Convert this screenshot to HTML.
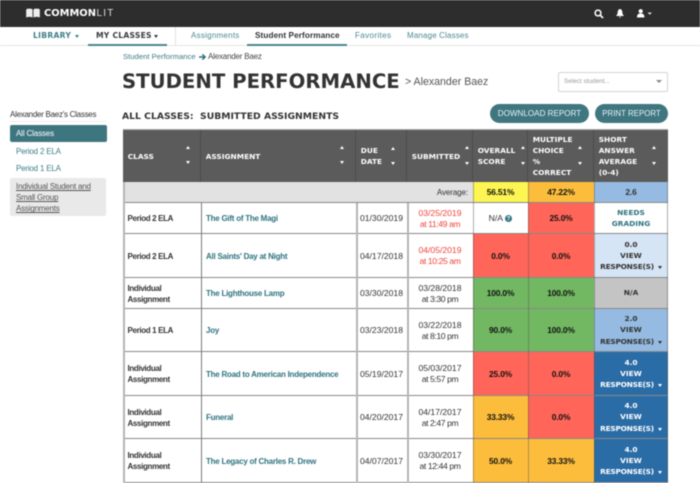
<!DOCTYPE html>
<html><head><meta charset="utf-8">
<style>
html,body{margin:0;padding:0;background:#fff}
#p{position:relative;width:700px;height:483px;overflow:hidden;background:#fff;font-family:"Liberation Sans",sans-serif;color:#333;filter:blur(.45px)}
#p div,#p span.a{position:absolute;box-sizing:border-box}
.t{white-space:nowrap}
.w{font-family:"DejaVu Sans",sans-serif;font-weight:700}
.c{display:flex;align-items:center;justify-content:center;text-align:center;font-size:8.6px;line-height:11.2px;border-bottom:1px solid #888;white-space:nowrap;padding-top:1.5px}
.l{justify-content:flex-start;text-align:left;padding-left:4.5px}
.d{font-weight:700;color:#333;font-size:8px;letter-spacing:-.35px}
.h{background:#5b5b5b;color:#fff;font-family:"DejaVu Sans",sans-serif;font-weight:700;font-size:7.4px;line-height:11px;display:flex;align-items:center;padding-left:4.7px;border-right:1px solid #4c4c4c}
.link{color:#2f7480;font-weight:700;font-size:8px;letter-spacing:-.25px;padding-left:5px}
.b{font-weight:700;color:#111;font-size:8.4px;letter-spacing:-.15px}
.u{font-family:"DejaVu Sans",sans-serif;font-weight:700;font-size:7.4px;line-height:11.3px;padding-top:0}
.r{letter-spacing:-.25px}
.s{letter-spacing:-.4px}
.red{background:#ff6659}.grn{background:#72b863}.org{background:#fdbd3c}.yel{background:#fdf551}
.dk{background:#2a6ca6;color:#fff}.lt{background:#d6e5f5;color:#333}.md{background:#96bbe2;color:#333}
.up,.dn{width:0;height:0;border-left:2.5px solid transparent;border-right:2.5px solid transparent}
.up{border-bottom:3px solid #fff}.dn{border-top:3px solid #fff}
.car{display:inline-block;width:0;height:0;border-left:2.5px solid transparent;border-right:2.5px solid transparent;border-top:3px solid currentColor;margin-left:4px;vertical-align:0}
</style></head><body><div id="p">

<!-- top bar -->
<div style="left:0;top:0;width:700px;height:27px;background:#2d2d2d"></div>
<svg style="position:absolute;left:26px;top:8px" width="14" height="10" viewBox="0 0 15 11"><path d="M0 1.5 C2 .5 5 .5 7 1.5 V10.5 C5 9.5 2 9.5 0 10.5Z M8 1.5 C10 .5 13 .5 15 1.5 V10.5 C13 9.5 10 9.5 8 10.5Z" fill="#eee"/></svg>
<div class="t w" style="left:44px;top:7px;font-size:9.9px;line-height:13px;color:#fff">COMMON</div>
<div class="t" style="left:96.5px;top:7px;font-size:10px;line-height:13px;color:#ddd;letter-spacing:1.2px">LIT</div>
<svg style="position:absolute;left:594px;top:9px" width="10" height="10" viewBox="0 0 10 10"><circle cx="4" cy="4" r="2.9" fill="none" stroke="#fff" stroke-width="1.5"/><path d="M6.2 6.2 L9 9" stroke="#fff" stroke-width="1.7"/></svg>
<svg style="position:absolute;left:616px;top:9px" width="8" height="9" viewBox="0 0 8 9"><path d="M4 0 C6 0.5 6.3 2 6.4 4 C6.5 5.5 7.4 6 8 7 H0 C.6 6 1.5 5.5 1.6 4 C1.7 2 2 .5 4 0Z M3 7.6 H5 L4 9Z" fill="#fff"/></svg>
<svg style="position:absolute;left:637px;top:9px" width="16" height="9" viewBox="0 0 16 9"><circle cx="3.7" cy="2.2" r="2.1" fill="#fff"/><path d="M0 8.5 C0 5 1.5 4.5 3.7 4.5 C5.9 4.5 7.4 5 7.4 8.5Z" fill="#fff"/><path d="M10.5 3.5 H15 L12.7 5.7Z" fill="#ddd"/></svg>

<!-- sub nav -->
<div style="left:0;top:27px;width:700px;height:19px;background:#fff;border-bottom:1px solid #e4e4e4"></div>
<div class="t w" style="left:33px;top:30px;font-size:7.6px;line-height:12px;color:#3f7f88;letter-spacing:.3px">LIBRARY</div>
<div class="a" style="left:75px;top:35px;width:0;height:0;border-left:2.5px solid transparent;border-right:2.5px solid transparent;border-top:3px solid #3f7f88"></div>
<div class="t w" style="left:96px;top:30px;font-size:7.6px;line-height:12px;color:#3a3a3a;letter-spacing:.25px">MY CLASSES</div>
<div class="a" style="left:154px;top:35px;width:0;height:0;border-left:2.5px solid transparent;border-right:2.5px solid transparent;border-top:3px solid #333"></div>
<div style="left:88px;top:44px;width:79px;height:2px;background:#4a8790"></div>
<div style="left:175px;top:27px;width:1px;height:18px;background:#e2e2e2"></div>
<div class="t" style="left:191px;top:30px;font-size:8px;line-height:12px;color:#4b8a93;letter-spacing:.25px">Assignments</div>
<div class="t" style="left:255px;top:30px;font-size:8.2px;line-height:12px;color:#333;font-weight:700;letter-spacing:.1px">Student Performance</div>
<div style="left:247px;top:44px;width:100px;height:2px;background:#4a8790"></div>
<div class="t" style="left:355px;top:30px;font-size:8.2px;line-height:12px;color:#4b8a93;letter-spacing:.3px">Favorites</div>
<div class="t" style="left:407px;top:30px;font-size:8px;line-height:12px;color:#4b8a93;letter-spacing:.15px">Manage Classes</div>

<!-- breadcrumb -->
<div class="t" style="left:123px;top:51px;font-size:7.7px;line-height:12px;color:#3c7c86">Student Performance</div>
<svg style="position:absolute;left:198.5px;top:53px" width="7" height="8" viewBox="0 0 8 8"><path d="M0 4 H6.5 M3.8 1 L7 4 L3.8 7" fill="none" stroke="#2f7480" stroke-width="1.7"/></svg>
<div class="t" style="left:208px;top:51px;font-size:8px;line-height:12px;color:#444;letter-spacing:-.2px">Alexander Baez</div>

<!-- title -->
<div class="t w" style="left:122px;top:68px;font-size:19.7px;line-height:27px;color:#333">STUDENT PERFORMANCE</div>
<div class="t" style="left:405px;top:74px;font-size:10.6px;line-height:16px;color:#555">&gt; Alexander Baez</div>

<!-- select -->
<div style="left:558px;top:72px;width:110px;height:20px;border:1px solid #d4d4d4;border-radius:2px;background:#fff"></div>
<div class="t" style="left:564px;top:76px;font-size:6.4px;line-height:12px;color:#999">Select student...</div>
<div class="a" style="left:656px;top:80px;width:0;height:0;border-left:3px solid transparent;border-right:3px solid transparent;border-top:3px solid #888"></div>

<!-- buttons -->
<div class="t" style="left:490px;top:104px;width:99px;height:19px;border-radius:10px;background:#3f7680;color:#eaf2f3;font-size:8.1px;line-height:19px;text-align:center">DOWNLOAD REPORT</div>
<div class="t" style="left:595px;top:104px;width:73px;height:19px;border-radius:10px;background:#3f7680;color:#eaf2f3;font-size:7.9px;line-height:19px;text-align:center">PRINT REPORT</div>

<div class="t w" style="left:122px;top:109.5px;font-size:9.25px;line-height:13px;color:#333">ALL CLASSES:&nbsp; SUBMITTED ASSIGNMENTS</div>

<!-- sidebar -->
<div class="t" style="left:10px;top:109px;font-size:8px;line-height:12px;color:#333;letter-spacing:-.27px">Alexander Baez's Classes</div>
<div style="left:10px;top:121px;width:96px;height:1px;background:#eee"></div>
<div class="t" style="left:10px;top:125px;width:97px;height:17px;background:#3e7680;border-radius:2px;color:#fff;font-size:8px;line-height:17px;padding-left:6px;letter-spacing:-.15px">All Classes</div>
<div class="t" style="left:16px;top:145.5px;font-size:8px;line-height:12px;color:#3c7f89;letter-spacing:-.2px">Period 2 ELA</div>
<div class="t" style="left:16px;top:163px;font-size:8px;line-height:12px;color:#3c7f89;letter-spacing:-.2px">Period 1 ELA</div>
<div style="left:10px;top:178px;width:96px;height:38px;background:#e9e9e9;border-radius:2px;padding:3px 6px;font-size:8px;letter-spacing:-.2px;line-height:11.2px;color:#555;text-decoration:underline">Individual Student and Small Group Assignments</div>

<!-- table header -->
<div style="left:123px;top:129px;width:545px;height:1px;background:#aaa"></div>
<div class="h" style="left:123px;top:130px;width:78px;height:52px">CLASS</div>
<div class="h" style="left:201px;top:130px;width:155px;height:52px">ASSIGNMENT</div>
<div class="h" style="left:356px;top:130px;width:51px;height:52px">DUE<br>DATE</div>
<div class="h" style="left:407px;top:130px;width:66px;height:52px">SUBMITTED</div>
<div class="h" style="left:473px;top:130px;width:55px;height:52px">OVERALL<br>SCORE</div>
<div class="h" style="left:528px;top:130px;width:66px;height:52px">MULTIPLE<br>CHOICE<br>%<br>CORRECT</div>
<div class="h" style="left:594px;top:130px;width:74px;height:52px;border-right:0">SHORT<br>ANSWER<br>AVERAGE<br>(0-4)</div>
<div class="up" style="left:186px;top:146px"></div><div class="dn" style="left:186px;top:161px"></div>
<div class="up" style="left:340px;top:146px"></div><div class="dn" style="left:340px;top:161px"></div>
<div class="up" style="left:391px;top:147px"></div><div class="dn" style="left:391px;top:162px"></div>
<div class="up" style="left:465px;top:146px"></div><div class="dn" style="left:465px;top:162px"></div>
<div class="up" style="left:521px;top:146px"></div><div class="dn" style="left:521px;top:162px"></div>
<div class="up" style="left:578px;top:146px"></div><div class="dn" style="left:578px;top:162px"></div>
<div class="up" style="left:652px;top:146px"></div><div class="dn" style="left:652px;top:162px"></div>

<!-- average row -->
<div class="c" style="left:123px;top:182px;width:350px;height:21px;background:#e2e2e2;justify-content:flex-end;padding-right:5px;font-size:8px;letter-spacing:-.1px;color:#333">Average:</div>
<div class="c b yel" style="left:473px;top:182px;width:55px;height:21px">56.51%</div>
<div class="c b org" style="left:528px;top:182px;width:66px;height:21px">47.22%</div>
<div class="c b md" style="left:594px;top:182px;width:74px;height:21px;color:#333">2.6</div>

<!-- row 1 -->
<div class="c l d" style="left:123px;top:203px;width:78px;height:31px">Period 2 ELA</div>
<div class="c l link" style="left:201px;top:203px;width:155px;height:31px">The Gift of The Magi</div>
<div class="c" style="left:356px;top:203px;width:51px;height:31px">01/30/2019</div>
<div class="c" style="left:407px;top:203px;width:66px;height:31px;color:#f0433a"><span>03/25/2019<br><span class="s">at 11:49 am</span></span></div>
<div class="c" style="left:473px;top:203px;width:55px;height:31px"><span>N/A&nbsp;<svg width="7" height="7" viewBox="0 0 7 7" style="vertical-align:-1px"><circle cx="3.5" cy="3.5" r="3.5" fill="#2f7480"/><text x="3.5" y="5.7" font-size="6" font-weight="700" text-anchor="middle" fill="#fff" font-family="Liberation Sans">?</text></svg></span></div>
<div class="c b red" style="left:528px;top:203px;width:66px;height:31px">25.0%</div>
<div class="c u" style="left:594px;top:203px;width:74px;height:31px;color:#2f7480"><span>NEEDS<br>GRADING</span></div>

<!-- row 2 -->
<div class="c l d" style="left:123px;top:234px;width:78px;height:44px">Period 2 ELA</div>
<div class="c l link" style="left:201px;top:234px;width:155px;height:44px">All Saints' Day at Night</div>
<div class="c" style="left:356px;top:234px;width:51px;height:44px">04/17/2018</div>
<div class="c" style="left:407px;top:234px;width:66px;height:44px;color:#f0433a"><span>04/05/2019<br><span class="s">at 10:25 am</span></span></div>
<div class="c b red" style="left:473px;top:234px;width:55px;height:44px">0.0%</div>
<div class="c b red" style="left:528px;top:234px;width:66px;height:44px">0.0%</div>
<div class="c u lt" style="left:594px;top:234px;width:74px;height:44px"><span>0.0<br>VIEW<br><span class="r">RESPONSE(S)</span><span class="car"></span></span></div>

<!-- row 3 -->
<div class="c l d" style="left:123px;top:278px;width:78px;height:31px"><span>Individual<br>Assignment</span></div>
<div class="c l link" style="left:201px;top:278px;width:155px;height:31px">The Lighthouse Lamp</div>
<div class="c" style="left:356px;top:278px;width:51px;height:31px">03/30/2018</div>
<div class="c" style="left:407px;top:278px;width:66px;height:31px"><span>03/28/2018<br><span class="s">at 3:30 pm</span></span></div>
<div class="c b grn" style="left:473px;top:278px;width:55px;height:31px">100.0%</div>
<div class="c b grn" style="left:528px;top:278px;width:66px;height:31px">100.0%</div>
<div class="c u" style="left:594px;top:278px;width:74px;height:31px;background:#c4c4c4;color:#333">N/A</div>

<!-- row 4 -->
<div class="c l d" style="left:123px;top:309px;width:78px;height:43px">Period 1 ELA</div>
<div class="c l link" style="left:201px;top:309px;width:155px;height:43px">Joy</div>
<div class="c" style="left:356px;top:309px;width:51px;height:43px">03/23/2018</div>
<div class="c" style="left:407px;top:309px;width:66px;height:43px"><span>03/22/2018<br><span class="s">at 8:10 pm</span></span></div>
<div class="c b grn" style="left:473px;top:309px;width:55px;height:43px">90.0%</div>
<div class="c b grn" style="left:528px;top:309px;width:66px;height:43px">100.0%</div>
<div class="c u md" style="left:594px;top:309px;width:74px;height:43px"><span>2.0<br>VIEW<br><span class="r">RESPONSE(S)</span><span class="car"></span></span></div>

<!-- row 5 -->
<div class="c l d" style="left:123px;top:352px;width:78px;height:44px"><span>Individual<br>Assignment</span></div>
<div class="c l link" style="left:201px;top:352px;width:155px;height:44px">The Road to American Independence</div>
<div class="c" style="left:356px;top:352px;width:51px;height:44px">05/19/2017</div>
<div class="c" style="left:407px;top:352px;width:66px;height:44px"><span>05/03/2017<br><span class="s">at 5:57 pm</span></span></div>
<div class="c b red" style="left:473px;top:352px;width:55px;height:44px">25.0%</div>
<div class="c b red" style="left:528px;top:352px;width:66px;height:44px">0.0%</div>
<div class="c u dk" style="left:594px;top:352px;width:74px;height:44px"><span>4.0<br>VIEW<br><span class="r">RESPONSE(S)</span><span class="car"></span></span></div>

<!-- row 6 -->
<div class="c l d" style="left:123px;top:396px;width:78px;height:43px"><span>Individual<br>Assignment</span></div>
<div class="c l link" style="left:201px;top:396px;width:155px;height:43px">Funeral</div>
<div class="c" style="left:356px;top:396px;width:51px;height:43px">04/20/2017</div>
<div class="c" style="left:407px;top:396px;width:66px;height:43px"><span>04/17/2017<br><span class="s">at 2:47 pm</span></span></div>
<div class="c b org" style="left:473px;top:396px;width:55px;height:43px">33.33%</div>
<div class="c b red" style="left:528px;top:396px;width:66px;height:43px">0.0%</div>
<div class="c u dk" style="left:594px;top:396px;width:74px;height:43px"><span>4.0<br>VIEW<br><span class="r">RESPONSE(S)</span><span class="car"></span></span></div>

<!-- row 7 -->
<div class="c l d" style="left:123px;top:439px;width:78px;height:44px"><span>Individual<br>Assignment</span></div>
<div class="c l link" style="left:201px;top:439px;width:155px;height:44px">The Legacy of Charles R. Drew</div>
<div class="c" style="left:356px;top:439px;width:51px;height:44px">04/07/2017</div>
<div class="c" style="left:407px;top:439px;width:66px;height:44px"><span>03/30/2017<br><span class="s">at 12:44 pm</span></span></div>
<div class="c b org" style="left:473px;top:439px;width:55px;height:44px">50.0%</div>
<div class="c b org" style="left:528px;top:439px;width:66px;height:44px">33.33%</div>
<div class="c u dk" style="left:594px;top:439px;width:74px;height:44px"><span>4.0<br>VIEW<br><span class="r">RESPONSE(S)</span><span class="car"></span></span></div>

<!-- vertical grid lines -->
<div style="left:123px;top:182px;width:2px;height:301px;background:#b5b5b5"></div>
<div style="left:201px;top:203px;width:1px;height:280px;background:#777"></div>
<div style="left:356px;top:203px;width:2px;height:280px;background:#b5b5b5"></div>
<div style="left:407px;top:203px;width:2px;height:280px;background:#b5b5b5"></div>
<div style="left:473px;top:182px;width:1px;height:301px;background:rgba(80,80,80,.45)"></div>
<div style="left:528px;top:182px;width:1px;height:301px;background:rgba(80,80,80,.45)"></div>
<div style="left:594px;top:182px;width:1px;height:301px;background:rgba(80,80,80,.45)"></div>
<div style="left:667px;top:182px;width:1px;height:301px;background:rgba(90,90,90,.5)"></div>

</div></body></html>
